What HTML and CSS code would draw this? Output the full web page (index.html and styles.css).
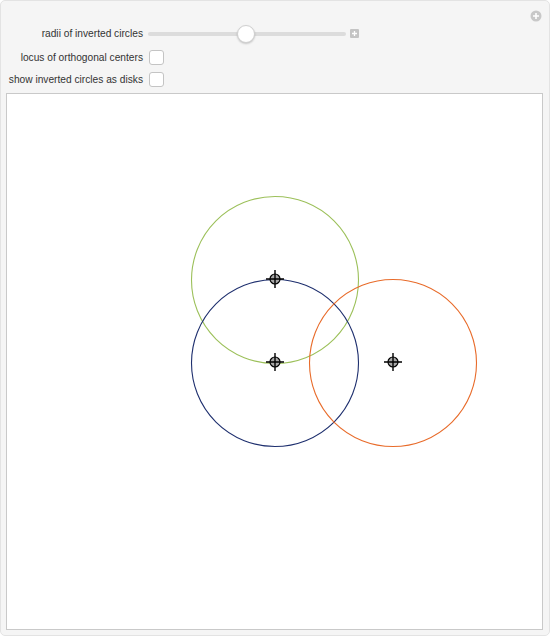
FILE: index.html
```html
<!DOCTYPE html>
<html>
  <head>
    <meta charset="UTF-8">
    <title>Inverted Circles</title>
    <link rel="stylesheet" href="styles.css">
  </head>
  <body>
    <div class="frame">
      <div class="corner-plus">
        <svg width="12" height="12" viewBox="0 0 12 12">
          <circle cx="6" cy="6" r="5.5" fill="#c8c8c8"/>
          <path d="M6 3v6M3 6h6" stroke="#fff" stroke-width="1.6"/>
        </svg>
      </div>
      <div class="controls">
        <div class="row first">
          <span class="label">radii of inverted circles</span>
          <div class="slider">
            <div class="track"></div>
            <div class="thumb"></div>
          </div>
          <svg class="step" width="9" height="9" viewBox="0 0 9 9">
            <rect width="9" height="9" rx="1" fill="#c4c4c4"/>
            <path d="M4.5 2v5M2 4.5h5" stroke="#fff" stroke-width="1.3"/>
          </svg>
        </div>
        <div class="row">
          <span class="label">locus of orthogonal centers</span>
          <div class="check"></div>
        </div>
        <div class="row">
          <span class="label">show inverted circles as disks</span>
          <div class="check"></div>
        </div>
      </div>
      <div class="plot">
        <svg width="535" height="535" viewBox="7 94 535 535">
          <g fill="none" stroke-width="1.1">
            <circle cx="275" cy="280" r="83.5" stroke="#9cc05a"/>
            <circle cx="275" cy="363" r="83.5" stroke="#1e2f6e"/>
            <circle cx="393" cy="363" r="83.5" stroke="#e86b2a"/>
          </g>
          <g stroke="#000">
            <circle cx="275" cy="279" r="5" fill="#a9a9a9" stroke-width="1.2"/>
            <path d="M275 270v18M266 279h18" stroke-width="1.4"/>
            <circle cx="275" cy="362" r="5" fill="#a9a9a9" stroke-width="1.2"/>
            <path d="M275 353v18M266 362h18" stroke-width="1.4"/>
            <circle cx="393" cy="362" r="5" fill="#a9a9a9" stroke-width="1.2"/>
            <path d="M393 353v18M384 362h18" stroke-width="1.4"/>
          </g>
        </svg>
      </div>
    </div>
  </body>
</html>
```

FILE: styles.css
```css
body {
  margin: 0;
  background: #ffffff;
  font-family: "Liberation Sans", Arial, sans-serif;
}
.frame {
  position: relative;
  box-sizing: border-box;
  width: 550px;
  height: 636px;
  background: #f5f5f5;
  border: 1px solid #e3e3e3;
  border-radius: 5px;
  padding: 21px 6px 0 4px;
}
.corner-plus {
  position: absolute;
  top: 7px;
  right: 7px;
  width: 12px;
  height: 12px;
}
.controls {
  display: flex;
  flex-direction: column;
}
.row {
  display: flex;
  align-items: center;
  height: 22px;
}
.row.first {
  margin-bottom: 2px;
}
.label {
  width: 138px;
  white-space: nowrap;
  text-align: right;
  font-size: 10.2px;
  color: #333333;
  margin-right: 5px;
}
.slider {
  position: relative;
  width: 198px;
  height: 22px;
}
.track {
  position: absolute;
  left: 0;
  right: 0;
  top: 10px;
  height: 4px;
  border-radius: 2px;
  background: #dcdcdc;
}
.thumb {
  position: absolute;
  left: 89px;
  top: 3px;
  width: 16px;
  height: 16px;
  border-radius: 50%;
  background: #ffffff;
  border: 1px solid #d0d0d0;
  box-shadow: 0 1px 2px rgba(0, 0, 0, 0.2);
}
.step {
  margin-left: 4px;
}
.check {
  width: 13px;
  height: 13px;
  margin-left: 1px;
  background: #ffffff;
  border: 1px solid #c4c4c4;
  border-radius: 3px;
}
.plot {
  margin: 3px 0 0 1px;
  width: 535px;
  height: 535px;
  border: 1px solid #c9c9c9;
  background: #ffffff;
}
.plot svg {
  display: block;
}
```
